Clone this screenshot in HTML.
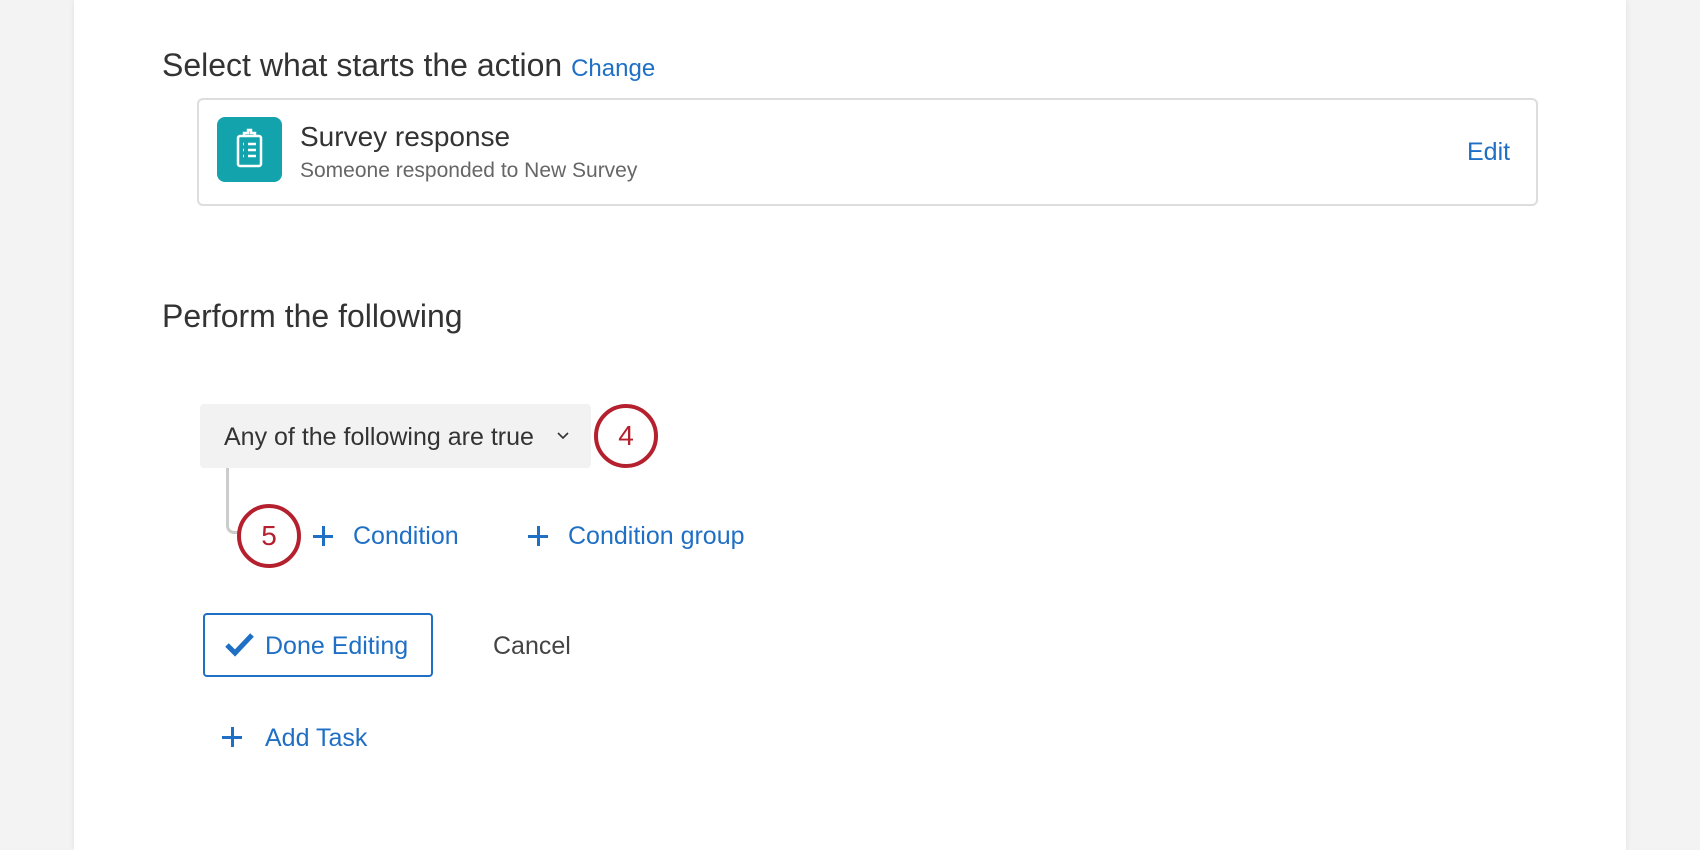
<!DOCTYPE html>
<html><head><style>
*{margin:0;padding:0;box-sizing:border-box}
body{width:1700px;height:850px;background:#f3f3f3;font-family:"Liberation Sans",sans-serif;position:relative;overflow:hidden;color:#333}
.card{position:absolute;left:74px;top:0;width:1552px;height:850px;background:#fff;box-shadow:0 0 6px rgba(0,0,0,.08)}
.a{position:absolute;white-space:nowrap}
.blue{color:#1f6fc5}
.circ{position:absolute;width:64px;height:64px;border:4px solid #b5202e;border-radius:50%;background:#fff;color:#b5202e;font-size:28px;text-align:center;line-height:56px}
.plus{position:absolute;width:20px;height:20px}
.plus:before,.plus:after{content:"";position:absolute;background:#1f6fc5}
.plus:before{left:9px;top:0;width:3px;height:20px}
.plus:after{top:9px;left:0;height:3px;width:20px}
</style></head><body>
<div class="card"></div>
<div class="a" style="left:162px;top:47px;font-size:32px;color:#333">Select what starts the action <span class="blue" style="font-size:24px">Change</span></div>
<div class="a" style="left:197px;top:98px;width:1341px;height:108px;border:2px solid #ddd;border-radius:6px"></div>
<div class="a" style="left:217px;top:117px;width:65px;height:65px;background:#13a3ad;border-radius:8px">
<svg width="65" height="65" viewBox="0 0 65 65" fill="none" stroke="#fff" stroke-width="2.5"><rect x="21" y="19" width="23" height="30" rx="2"/><path d="M27 19v-3h4v-3h3v3h4v3"/><path d="M26 27h1M31 27h8M26 33h1M31 33h8M26 39h1M31 39h8"/></svg></div>
<div class="a" style="left:300px;top:121px;font-size:28px;color:#333">Survey response</div>
<div class="a" style="left:300px;top:159px;font-size:21px;color:#666">Someone responded to New Survey</div>
<div class="a blue" style="left:1467px;top:138px;font-size:25px">Edit</div>
<div class="a" style="left:162px;top:298px;font-size:32px;color:#333">Perform the following</div>
<div class="a" style="left:200px;top:404px;width:391px;height:64px;background:#f2f2f2;border-radius:4px"></div>
<div class="a" style="left:224px;top:423px;font-size:25px;color:#333">Any of the following are true</div>
<svg class="a" style="left:556px;top:431px" width="14" height="10"><path d="M2 2l5 5 5-5" stroke="#333" stroke-width="1.6" fill="none"/></svg>
<div class="circ" style="left:594px;top:404px">4</div>
<div class="a" style="left:226px;top:468px;width:14px;height:66px;border-left:3px solid #ccc;border-bottom:3px solid #ccc;border-bottom-left-radius:8px"></div>
<div class="circ" style="left:237px;top:504px">5</div>
<div class="plus" style="left:313px;top:526px"></div>
<div class="a blue" style="left:353px;top:522px;font-size:25px">Condition</div>
<div class="plus" style="left:528px;top:526px"></div>
<div class="a blue" style="left:568px;top:522px;font-size:25px">Condition group</div>
<div class="a" style="left:203px;top:613px;width:230px;height:64px;border:2px solid #1f6fc5;border-radius:4px"></div>
<svg class="a" style="left:224px;top:632px" width="32" height="26"><path d="M3 13l8 8L28 3" stroke="#1f6fc5" stroke-width="5" fill="none"/></svg>
<div class="a blue" style="left:265px;top:632px;font-size:25px">Done Editing</div>
<div class="a" style="left:493px;top:632px;font-size:25px;color:#444">Cancel</div>
<div class="plus" style="left:222px;top:727px"></div>
<div class="a blue" style="left:265px;top:724px;font-size:25px">Add Task</div>
</body></html>
